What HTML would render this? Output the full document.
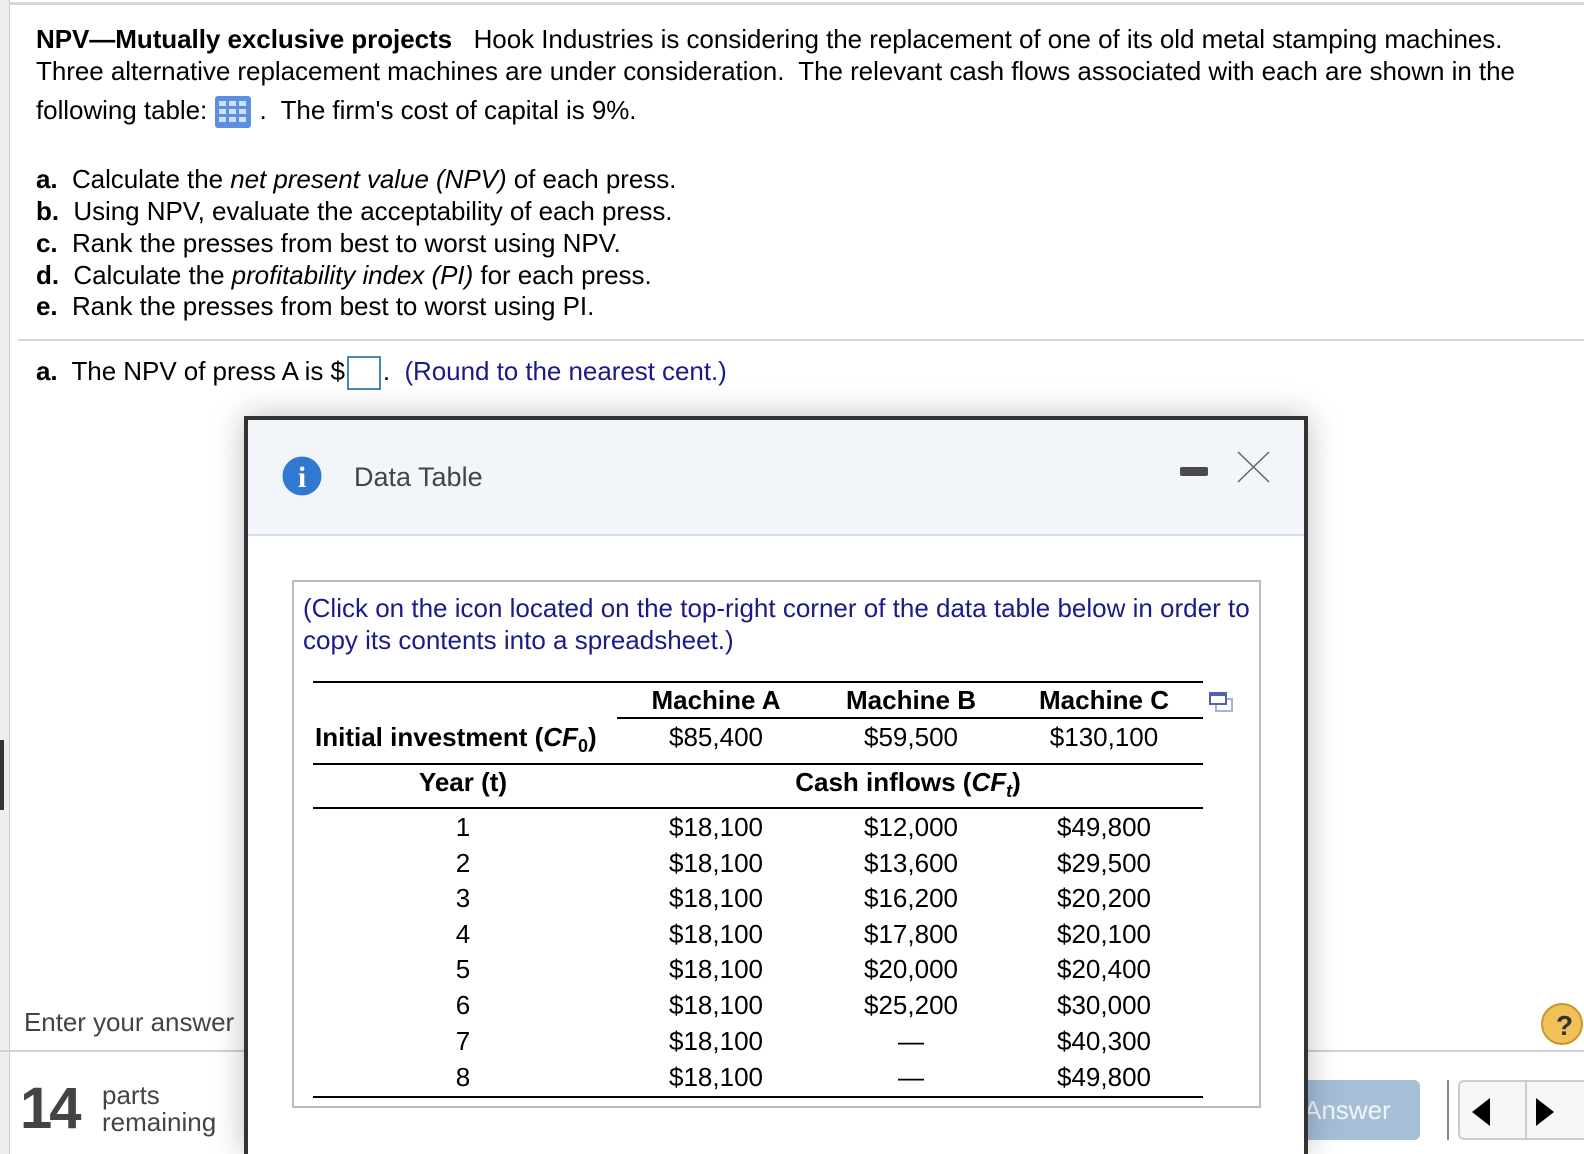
<!DOCTYPE html>
<html><head><meta charset="utf-8"><style>
*{margin:0;padding:0;box-sizing:border-box}
html,body{width:1584px;height:1154px;overflow:hidden;background:#fff;font-family:"Liberation Sans",Arial,sans-serif;color:#000}
.a{position:absolute;white-space:nowrap}
.t{font-size:26px;line-height:30px;letter-spacing:-0.05px}
.c{transform:translateX(-50%)}
.tb{font-size:26px;line-height:30px;letter-spacing:0}
.hl{position:absolute;height:2px;background:#000}
</style></head><body>
<div class="a" style="left:0;top:2px;width:1584px;height:3px;background:#d4d7e0"></div>
<div class="a" style="left:0;top:0;width:10px;height:1154px;background:#eee;border-right:1px solid #ccc"></div>
<div class="a" style="left:0;top:740px;width:4px;height:70px;background:#333"></div>

<div class="a t" style="left:36px;top:24px"><b>NPV—Mutually exclusive projects</b>&nbsp;&nbsp; Hook Industries is considering the replacement of one of its old metal stamping machines.</div>
<div class="a t" style="left:36px;top:56px">Three alternative replacement machines are under consideration.&nbsp; The relevant cash flows associated with each are shown in the</div>
<div class="a t" style="left:36px;top:95px">following table: <svg width="38" height="34" viewBox="0 0 38 34" style="vertical-align:-10px"><rect x="1" y="1" width="36" height="32" rx="3" fill="#5b8fe0"/><g fill="#cfe0fb"><rect x="5" y="6" width="7" height="5"/><rect x="15" y="6" width="7" height="5"/><rect x="25" y="6" width="7" height="5"/><rect x="5" y="14" width="7" height="5"/><rect x="15" y="14" width="7" height="5"/><rect x="25" y="14" width="7" height="5"/><rect x="5" y="22" width="7" height="5"/><rect x="15" y="22" width="7" height="5"/><rect x="25" y="22" width="7" height="5"/></g></svg> .&nbsp; The firm's cost of capital is 9%.</div>

<div class="a t" style="left:36px;top:164px"><b>a.</b>&nbsp; Calculate the <i>net present value (NPV)</i> of each press.</div>
<div class="a t" style="left:36px;top:196px"><b>b.</b>&nbsp; Using NPV, evaluate the acceptability of each press.</div>
<div class="a t" style="left:36px;top:228px"><b>c.</b>&nbsp; Rank the presses from best to worst using NPV.</div>
<div class="a t" style="left:36px;top:260px"><b>d.</b>&nbsp; Calculate the <i>profitability index (PI)</i> for each press.</div>
<div class="a t" style="left:36px;top:291px"><b>e.</b>&nbsp; Rank the presses from best to worst using PI.</div>
<div class="a" style="left:18px;top:339px;width:1566px;height:2px;background:#d0d3dc"></div>
<div class="a t" style="left:36px;top:356px"><b>a.</b>&nbsp; The NPV of press A is $<span style="display:inline-block;width:34px;height:34px;border:2px solid #4a86b0;vertical-align:middle;margin:0 2px"></span>.&nbsp; <span style="color:#1a1a8a">(Round to the nearest cent.)</span></div>

<div class="a t" style="left:24px;top:1007px;color:#444">Enter your answer</div>
<div class="a" style="left:0;top:1050px;width:1584px;height:2px;background:#cdd1dc"></div>
<div class="a" style="left:20px;top:1080px;font-size:58px;line-height:58px;font-weight:bold;color:#444;letter-spacing:-3px">14</div>
<div class="a" style="left:102px;top:1082px;font-size:26px;line-height:27px;color:#444">parts<br>remaining</div>
<div class="a" style="left:1290px;top:1080px;width:130px;height:60px;background:#a5bfd9;border-radius:6px;color:#f2f5f8;font-size:26px;line-height:60px;padding-left:14px">Answer</div>
<div class="a" style="left:1447px;top:1080px;width:2px;height:60px;background:#888"></div>
<div class="a" style="left:1458px;top:1080px;width:126px;height:60px;background:#f6f6f6;border:2px solid #ccc;border-right:none;border-radius:6px 0 0 6px"></div>
<div class="a" style="left:1525px;top:1082px;width:2px;height:56px;background:#ccc"></div>
<svg class="a" style="left:1468px;top:1096px" width="100" height="32"><polygon points="22,2 22,30 4,16" fill="#000"/><polygon points="68,2 68,30 86,16" fill="#000"/></svg>
<svg class="a" style="left:1540px;top:1002px" width="44" height="44"><circle cx="22" cy="22" r="20" fill="#f1c159" stroke="#c9962b" stroke-width="2"/><text x="16" y="33" font-family="Liberation Sans" font-weight="bold" font-size="28" fill="#333">?</text></svg>

<!-- modal -->
<div class="a" style="left:244px;top:416px;width:1064px;height:738px;border:4px solid #333;border-bottom:none;background:#fff;box-shadow:0 0 30px rgba(0,0,0,0.25)">
  <div style="position:absolute;left:0;top:0;width:1056px;height:116px;background:#f2f5fa;border-bottom:2px solid #cfe2f5"></div>
</div>
<svg class="a" style="left:282px;top:456px" width="42" height="42"><circle cx="20" cy="20" r="19.5" fill="#2f7ad0"/><text x="20" y="31" text-anchor="middle" font-family="Liberation Serif" font-weight="bold" font-size="30" fill="#fff">i</text></svg>
<div class="a" style="left:354px;top:461px;font-size:27px;line-height:32px;color:#444">Data Table</div>
<div class="a" style="left:1180px;top:467px;width:28px;height:9px;background:#4a4a4a;border-radius:2px"></div>
<svg class="a" style="left:1236px;top:450px" width="36" height="34"><path d="M2 2 L33 32 M33 2 L2 32" stroke="#666" stroke-width="1.5"/></svg>

<div class="a" style="left:292px;top:580px;width:969px;height:528px;border:2px solid #bbb"></div>
<div class="a" style="left:303px;top:592px;font-size:26px;line-height:32px;color:#1a1a8a;letter-spacing:0">(Click on the icon located on the top-right corner of the data table below in order to<br>copy its contents into a spreadsheet.)</div>

<div class="hl" style="left:313px;top:681px;width:890px"></div>
<div class="hl" style="left:617px;top:717px;width:586px"></div>
<div class="hl" style="left:313px;top:763px;width:890px"></div>
<div class="hl" style="left:313px;top:807px;width:890px"></div>
<div class="hl" style="left:313px;top:1096px;width:890px"></div>
<svg class="a" style="left:1209px;top:691px" width="26" height="24"><rect x="7" y="8" width="16" height="12" fill="none" stroke="#a8b3d8" stroke-width="2"/><rect x="1" y="2" width="16" height="11" fill="#fff" stroke="#4f63a8" stroke-width="2"/><rect x="1" y="2" width="16" height="3" fill="#4f63a8"/></svg>

<div class="a tb c" style="left:716px;top:685px;font-weight:bold">Machine A</div>
<div class="a tb c" style="left:911px;top:685px;font-weight:bold">Machine B</div>
<div class="a tb c" style="left:1104px;top:685px;font-weight:bold">Machine C</div>
<div class="a tb" style="left:315px;top:722px;font-weight:bold">Initial investment (<i>CF</i><sub style="font-size:18px">0</sub>)</div>
<div class="a tb c" style="left:716px;top:722px">$85,400</div>
<div class="a tb c" style="left:911px;top:722px">$59,500</div>
<div class="a tb c" style="left:1104px;top:722px">$130,100</div>
<div class="a tb c" style="left:463px;top:767px;font-weight:bold">Year (t)</div>
<div class="a tb c" style="left:908px;top:767px;font-weight:bold">Cash inflows (<i>CF</i><sub style="font-size:18px"><i>t</i></sub>)</div>

<div class="a tb c" style="left:463px;top:812px">1</div><div class="a tb c" style="left:716px;top:812px">$18,100</div><div class="a tb c" style="left:911px;top:812px">$12,000</div><div class="a tb c" style="left:1104px;top:812px">$49,800</div>
<div class="a tb c" style="left:463px;top:848px">2</div><div class="a tb c" style="left:716px;top:848px">$18,100</div><div class="a tb c" style="left:911px;top:848px">$13,600</div><div class="a tb c" style="left:1104px;top:848px">$29,500</div>
<div class="a tb c" style="left:463px;top:883px">3</div><div class="a tb c" style="left:716px;top:883px">$18,100</div><div class="a tb c" style="left:911px;top:883px">$16,200</div><div class="a tb c" style="left:1104px;top:883px">$20,200</div>
<div class="a tb c" style="left:463px;top:919px">4</div><div class="a tb c" style="left:716px;top:919px">$18,100</div><div class="a tb c" style="left:911px;top:919px">$17,800</div><div class="a tb c" style="left:1104px;top:919px">$20,100</div>
<div class="a tb c" style="left:463px;top:954px">5</div><div class="a tb c" style="left:716px;top:954px">$18,100</div><div class="a tb c" style="left:911px;top:954px">$20,000</div><div class="a tb c" style="left:1104px;top:954px">$20,400</div>
<div class="a tb c" style="left:463px;top:990px">6</div><div class="a tb c" style="left:716px;top:990px">$18,100</div><div class="a tb c" style="left:911px;top:990px">$25,200</div><div class="a tb c" style="left:1104px;top:990px">$30,000</div>
<div class="a tb c" style="left:463px;top:1026px">7</div><div class="a tb c" style="left:716px;top:1026px">$18,100</div><div class="a tb c" style="left:911px;top:1026px">—</div><div class="a tb c" style="left:1104px;top:1026px">$40,300</div>
<div class="a tb c" style="left:463px;top:1062px">8</div><div class="a tb c" style="left:716px;top:1062px">$18,100</div><div class="a tb c" style="left:911px;top:1062px">—</div><div class="a tb c" style="left:1104px;top:1062px">$49,800</div>
</body></html>
